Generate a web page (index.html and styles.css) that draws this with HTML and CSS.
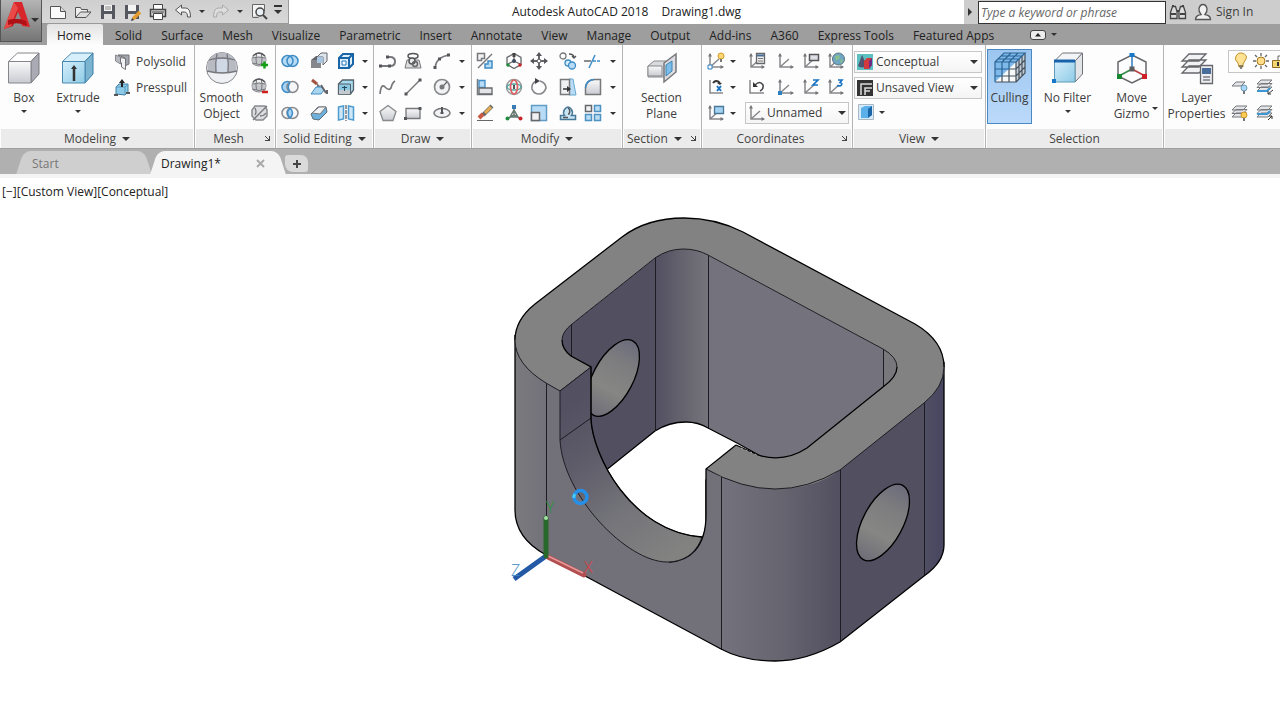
FILE: index.html
```html
<!DOCTYPE html>
<html lang="en">
<head>
  <meta charset="UTF-8">
  <meta name="viewport" content="width=device-width, initial-scale=1.0">
  <title>Autodesk AutoCAD 2018 - Drawing1.dwg</title>
  <link rel="stylesheet" href="styles.css">
</head>
<body>
  <!-- Shared icon parts -->
  <svg class="defs" aria-hidden="true">
    <defs>
      <linearGradient id="steel" x1="0" y1="0" x2="0" y2="1">
        <stop offset="0" stop-color="#fafafa"/><stop offset="1" stop-color="#c9cbd2"/>
      </linearGradient>
      <linearGradient id="sky" x1="0" y1="0" x2="1" y2="1">
        <stop offset="0" stop-color="#d4eefb"/><stop offset="1" stop-color="#8ecbe6"/>
      </linearGradient>
      <symbol id="ucs" viewBox="0 0 18 18">
        <path d="M3 2v13h13M3 15l9-8" fill="none" stroke="#88888c" stroke-width="1.500"/>
        <path d="M1 4.500L3 1l2 3.500zM13.500 13l3.500 2-3.500 2z" fill="#77777b"/>
      </symbol>
      <symbol id="ball" viewBox="0 0 18 18">
        <path d="M1 8q0-6 7-7 7 1 7 7l-1 4q-6 4-12 0z" fill="url(#steel)" stroke="#88898d"/>
        <path d="M1.500 6q6.500-2 13 0v5q-6.500 3-13 0z" fill="#c4c6cc"/>
        <path d="M1.500 6q6.500-2 13 0M1.500 11q6.500 3 13 0M5.500 2q-1 5 0 10M10.500 2q1 5 0 10" fill="none" stroke="#77787c"/>
        <path d="M2 4Q8-2 14 4" fill="none" stroke="#55565a" stroke-width="1.500"/>
      </symbol>
      <symbol id="layers" viewBox="0 0 18 18">
        <path d="M5 9h11l-4 4H1zM5 5.500h11l-4 4H1zM5 2h11l-4 4H1z" fill="#e4e5e8" stroke="#77787c"/>
      </symbol>
    </defs>
  </svg>

  <header class="header">
    <button class="app-button" aria-label="Application menu">
      <svg width="28" height="32" viewBox="0 0 28 32">
        <path d="M11 2h8l-9 24-9 3z" fill="#c4161c"/>
        <path d="M11 2h8l8 25-8-1z" fill="#d8262b"/>
        <path d="M11 2l4 6-7 18-7 3z" fill="#e94a48"/>
        <path d="M5 20q9-3 18 1l1 5q-9-5-19-1z" fill="#b01117"/>
        <path d="M15 12l3 7h-6z" fill="#8b8b8b"/>
      </svg>
      <span class="caret wide"></span>
    </button>
    <div class="header-rows">
      <div class="title-row">
        <div class="quick-access">
          <button aria-label="New"><svg width="18" height="18"><path d="M1.500 3.500h10l5 5v7h-15z" fill="#fafafa" stroke="#555"/><path d="M11.500 3.500v5h5" fill="#ddd" stroke="#555"/></svg></button>
          <button aria-label="Open"><svg width="18" height="18"><path d="M1.500 14.500v-10h5l1 2h6v3" fill="#eee" stroke="#555"/><path d="M1.500 14.500l5-5.500h10.500l-5 5.500z" fill="#ddd" stroke="#555"/></svg></button>
          <button aria-label="Save"><svg width="18" height="18"><path d="M2 2h14v14H2z" fill="#55585e"/><path d="M5 2h8v6H5z" fill="#f4f4f4"/><path d="M5 11h8v5H5z" fill="#ddd"/><path d="M6 4h6M6 6h6" stroke="#888"/></svg></button>
          <button aria-label="Save as"><svg width="18" height="18"><path d="M1 2h14v14H1z" fill="#55585e"/><path d="M4 2h8v6H4z" fill="#f4f4f4"/><path d="M4 11h8v5H4z" fill="#ddd"/><path d="M9 16l7-7" stroke="#e59a2c" stroke-width="3.500"/><path d="M7 18l1-3 2 2z" fill="#333"/></svg></button>
          <button aria-label="Plot"><svg width="18" height="18"><path d="M4.500 1.500h9v5h-9z" fill="#fff" stroke="#444"/><path d="M1.500 6.500h15v7h-15z" fill="#d4d4d4" stroke="#444" stroke-width="1.500"/><path d="M4.500 10.500h9v6h-9z" fill="#fff" stroke="#444"/><path d="M3 9h12" stroke="#444"/></svg></button>
          <button aria-label="Undo"><svg width="18" height="18"><path d="M1.500 7l6-5v3h4q5 0 5 9h-3q0-5-3-5h-3v3z" fill="#f2f2f2" stroke="#555"/></svg></button>
          <button class="caret" aria-label="Undo list"></button>
          <button aria-label="Redo"><svg width="18" height="18"><path d="M16.500 7l-6-5v3h-4q-5 0-5 9h3q0-5 3-5h3v3z" fill="#ddd" stroke="#aaa"/></svg></button>
          <button class="caret" aria-label="Redo list"></button>
          <button aria-label="Preview"><svg width="18" height="18"><path d="M2.500 14V1.500h12V8M2.500 14.500h6" fill="#f4f4f4" stroke="#666"/><circle cx="10" cy="9" r="4" fill="#eaf1f5" stroke="#444" stroke-width="1.500"/><path d="M13 12l4 4" stroke="#444" stroke-width="2"/></svg></button>
          <button class="caret caret-bar" aria-label="Customize toolbar"></button>
        </div>
        <div class="window-title"><span>Autodesk AutoCAD 2018</span><span>Drawing1.dwg</span></div>
        <div class="info-center">
          <button class="expand" aria-label="Collapse search"></button>
          <input class="search" type="text" placeholder="Type a keyword or phrase" aria-label="Search">
          <button aria-label="Find"><svg width="18" height="18"><path d="M3.500 3.500h3l1.500 5v7H1.500v-6zM11.500 3.500h3l2 6v6H10v-7z" fill="#ddd" stroke="#444" stroke-width="1.300"/><path d="M8 8h2M2 11h5M11 11h5M4 2v2M14 2v2" stroke="#444" stroke-width="2"/></svg></button>
          <button class="sign-in"><svg width="18" height="18"><path d="M1.500 16.500q0-4 5.500-5-2.500-3-2-6 1-4 4-4t4 4q.5 3-2 6 5.500 1 5.500 5z" fill="#f1f1f1" stroke="#555" stroke-width="1.300"/></svg>Sign In</button>
        </div>
      </div>
      <nav class="ribbon-tabs">
        <a class="active" href="#">Home</a>
        <a href="#">Solid</a>
        <a href="#">Surface</a>
        <a href="#">Mesh</a>
        <a href="#">Visualize</a>
        <a href="#">Parametric</a>
        <a href="#">Insert</a>
        <a href="#">Annotate</a>
        <a href="#">View</a>
        <a href="#">Manage</a>
        <a href="#">Output</a>
        <a href="#">Add-ins</a>
        <a href="#">A360</a>
        <a href="#">Express Tools</a>
        <a href="#">Featured Apps</a>
        <button class="minimize" aria-label="Minimize ribbon"><svg width="16" height="10"><rect x=".5" y=".5" width="15" height="9" rx="2.500" fill="#eee" stroke="#444"/><path d="M5 6.500L8 3l3 3.500z" fill="#222"/></svg></button>
        <button class="caret" aria-label="Ribbon options"></button>
      </nav>
    </div>
  </header>

  <main class="ribbon">
    <section class="panel modeling">
      <div class="panel-body">
        <button class="big box"><svg width="34" height="34"><path d="M1.500 10.500l9-8.500h21.500l-8 8.500z" fill="#fff" stroke="#85868b"/><path d="M24 10.500L32 2v21l-8 9z" fill="#a9aab3" stroke="#77787e"/><path d="M1.500 10.500H24V32H1.500z" fill="url(#steel)" stroke="#85868b"/></svg>Box<span class="caret"></span></button>
        <button class="big extrude"><svg width="34" height="34"><path d="M1.500 10.500l9-8.500h21.500l-8 8.500z" fill="#d7effb" stroke="#4a8ab0"/><path d="M24 10.500L32 2v21l-8 9z" fill="#7bb4d1" stroke="#3b7ca3"/><path d="M1.500 10.500H24V32H1.500z" fill="url(#sky)" stroke="#4a8ab0"/><path d="M13 30V16" stroke="#333" stroke-width="2.500"/><path d="M10 18l3-4 3 4z" fill="#333"/></svg>Extrude<span class="caret"></span></button>
        <div class="text-tools">
          <button><svg width="18" height="18"><path d="M1.500 2l5 2v7l-5-3z" fill="#b9bac0" stroke="#88898e"/><path d="M4 2h11v9l-4 2V5z" fill="#a3a5ac" stroke="#717278"/><path d="M6.500 4.500l5 1v11l-4-2.500V10l-1-1z" fill="#f2f2f4" stroke="#717278"/></svg>Polysolid</button>
          <button><svg width="18" height="18"><path d="M2 15V8l3-3h9v8l-3 3z" fill="#8dcbe8" stroke="#3b7ca3"/><path d="M2 8h9v7M11 8l3-3" fill="none" stroke="#5a9abb"/><path d="M8 8V3" stroke="#222" stroke-width="2"/><path d="M5 4l3-4 3 4z" fill="#222"/><path d="M0 16h4M12 14h4" stroke="#555" stroke-width="2"/></svg>Presspull</button>
        </div>
      </div>
      <h2>Modeling <span class="caret wide"></span></h2>
    </section>

    <section class="panel mesh">
      <div class="panel-body">
        <button class="big smooth"><svg width="34" height="34"><circle cx="17" cy="17" r="15.500" fill="#eff0f3" stroke="#88898e"/><path d="M2 13q4-11 15-11.500Q28 2 32 13l-1 7q-14 4-28 0z" fill="#b9bbc3"/><path d="M11 8h12v13H11z" fill="#d0d8e6"/><path d="M2 20q15 4 30 0M4 9q13-4 26 0M12 3q-2 9-1 18M22 3q2 9 1 18" fill="none" stroke="#77787e" stroke-width="1.300"/></svg>Smooth<br>Object</button>
        <div class="tools">
          <button aria-label="Smooth more"><svg width="18" height="18"><use href="#ball"/><path d="M10 13h7M13.500 9.500v7" stroke="#13a016" stroke-width="2.500"/></svg></button>
          <button aria-label="Smooth less"><svg width="18" height="18"><use href="#ball"/><path d="M11 14h6" stroke="#d21d1d" stroke-width="2.500"/></svg></button>
          <button aria-label="Refine mesh"><svg width="18" height="18"><path d="M4 2h10l2 4v6l-4 4H5l-4-4V6z" fill="#dcdde1" stroke="#88898d" stroke-width="1.500"/><path d="M2 16L16 2M4 4q2 4 0 7M9 12q4 0 6-3" stroke="#77787c" stroke-width="1.300" fill="none"/></svg></button>
        </div>
      </div>
      <h2>Mesh <span class="launcher"></span></h2>
    </section>

    <section class="panel solid">
      <div class="panel-body tools">
        <button aria-label="Union"><svg width="18" height="18"><circle cx="6.500" cy="9" r="5.500" fill="#b8dcf5"/><circle cx="11.500" cy="9" r="5.500" fill="#b8dcf5"/><circle cx="6.500" cy="9" r="5.500" fill="none" stroke="#3e8cc6" stroke-width="1.500"/><circle cx="11.500" cy="9" r="5.500" fill="none" stroke="#3e8cc6" stroke-width="1.500"/></svg></button>
        <button aria-label="Extract edges"><svg width="18" height="18"><path d="M1 8l5-4h4v9l-3 3H1z" fill="#62656b"/><path d="M1 8h10v8H1z" fill="#85878c"/><path d="M7 5l4-4h6v8l-4 4V5z" fill="#dfe5ec" stroke="#66676c"/><path d="M7 5h6v6H7z" fill="#a8c6e2"/></svg></button>
        <button aria-label="Shell"><svg width="18" height="18"><path d="M2 6l4-4h10v10l-4 4H2z" fill="#dff0fb" stroke="#1a64a8" stroke-width="2"/><path d="M2 6h10v10M12 6l4-4" fill="none" stroke="#1a64a8" stroke-width="2"/><path d="M5 9h4v4H5z" fill="#fff" stroke="#2678bb"/></svg></button>
        <button class="caret" aria-label="More solid tools"></button>

        <button aria-label="Subtract"><svg width="18" height="18"><circle cx="6.500" cy="9" r="5.500" fill="#a8d3f2" stroke="#3e8cc6" stroke-width="1.500"/><circle cx="11.500" cy="9" r="5.500" fill="#f6f6f8" stroke="#88898d" stroke-width="1.500"/><path d="M9 4.500q-3.500 4.500 0 9" fill="none" stroke="#3e8cc6" stroke-width="1.500"/></svg></button>
        <button aria-label="Imprint"><svg width="18" height="18"><path d="M2 2l5 4" stroke="#a45643" stroke-width="3"/><path d="M7 5l4 4-4 1z" fill="#777"/><path d="M6 9h5l3 3-3 4H1z" fill="#a9d5ef" stroke="#3e8cc6"/><path d="M11 7l5 8M17 16v-4" stroke="#66676b" stroke-width="2"/></svg></button>
        <button aria-label="Offset face"><svg width="18" height="18"><path d="M1.500 6l4-4h11v10l-3 4h-12z" fill="#a5daf0" stroke="#56616a" stroke-width="1.300"/><path d="M1.500 6h12v10h-12z" fill="#8cc7e2" stroke="#56616a"/><path d="M2 12h11v4H2z" fill="#c3cbd0"/><path d="M7.500 13V8M5 9.500h5" stroke="#24495e"/></svg></button>
        <button class="caret" aria-label="More face tools"></button>

        <button aria-label="Intersect"><svg width="18" height="18"><circle cx="6.500" cy="9" r="5.500" fill="#f6f6f8" stroke="#88898d" stroke-width="1.500"/><circle cx="11.500" cy="9" r="5.500" fill="#f6f6f8" stroke="#88898d" stroke-width="1.500"/><path d="M9 4q5 5 0 10-5-5 0-10z" fill="#a8d3f2" stroke="#3e8cc6" stroke-width="1.500"/></svg></button>
        <button aria-label="Fillet edge"><svg width="18" height="18"><path d="M1 10l7-7h8l1 5-8 8-6-1z" fill="#6db0db" stroke="#5c6a75"/><path d="M2 9l7-6h7l-6 7z" fill="#f1f3f5" stroke="#77787c"/></svg></button>
        <button aria-label="Separate"><svg width="18" height="18"><path d="M1.500 3l5-1v13l-5 1zM16.500 3l-5-1v13l5 1z" fill="#cde7f7" stroke="#4e9bcf" stroke-width="1.500"/><path d="M9 1v16" stroke="#77787c" stroke-width="1.500" stroke-dasharray="4 1"/></svg></button>
        <button class="caret" aria-label="More body tools"></button>
      </div>
      <h2>Solid Editing <span class="caret wide"></span></h2>
    </section>

    <section class="panel draw">
      <div class="panel-body tools">
        <button aria-label="Polyline"><svg width="18" height="18"><path d="M2 14h9q5 0 5-4.500T11 5H8" fill="none" stroke="#77787c" stroke-width="2"/><path d="M0 12.500h3v3H0zM7 3.500h3v3H7zM9 12.500h3v3H9z" fill="#55565a"/></svg></button>
        <button aria-label="Helix"><svg width="18" height="18"><path d="M3 8h12l2 8H1z" fill="#ddd" stroke="#77787c"/><ellipse cx="9" cy="4" rx="5" ry="2.500" fill="none" stroke="#55565a" stroke-width="1.500"/><ellipse cx="8" cy="9" rx="3" ry="3" fill="#eee" stroke="#55565a" stroke-width="1.500"/><circle cx="11" cy="12" r="2.500" fill="none" stroke="#66676b" stroke-width="1.500"/></svg></button>
        <button aria-label="Arc"><svg width="18" height="18"><path d="M2 16Q3 5 16 3" fill="none" stroke="#77787c" stroke-width="1.500"/><path d="M.5 14h3v3h-3zM5 5.500h3v3H5zM14 1.500h3v3h-3z" fill="#55565a"/></svg></button>
        <button class="caret" aria-label="Arc options"></button>

        <button aria-label="Spline"><svg width="18" height="18"><path d="M1 16Q2 5 6 9t6 1q1-5 4-7" fill="none" stroke="#77787c" stroke-width="1.700"/></svg></button>
        <button aria-label="Line"><svg width="18" height="18"><path d="M2 16L16 2" stroke="#77787c" stroke-width="1.500"/><path d="M.5 14.500h3v3h-3zM14.500.5h3v3h-3z" fill="#55565a"/></svg></button>
        <button aria-label="Circle"><svg width="18" height="18"><circle cx="9" cy="9" r="7.500" fill="#f1f2f4" stroke="#88898d" stroke-width="1.700"/><path d="M9 9l5-5" stroke="#66676b" stroke-width="1.300"/><circle cx="9" cy="9" r="2.500" fill="#77787c"/></svg></button>
        <button class="caret" aria-label="Circle options"></button>

        <button aria-label="Polygon"><svg width="18" height="18"><path d="M9 1.500l8 6-3 9H4L1 7.500z" fill="url(#steel)" stroke="#88898d" stroke-width="1.300"/></svg></button>
        <button aria-label="Rectangle"><svg width="18" height="18"><path d="M2 4.500h14v10H2z" fill="url(#steel)" stroke="#77787c" stroke-width="1.300"/><path d="M0 13h3v3H0zM14.500 3h3v3h-3z" fill="#55565a"/></svg></button>
        <button aria-label="Ellipse"><svg width="18" height="18"><ellipse cx="9" cy="9" rx="8" ry="4.500" fill="#f1f2f4" stroke="#77787c" stroke-width="1.500"/><path d="M9 3v7M7.500 9h3" stroke="#55565a" stroke-width="2"/></svg></button>
        <button class="caret" aria-label="Ellipse options"></button>
      </div>
      <h2>Draw <span class="caret wide"></span></h2>
    </section>

    <section class="panel modify">
      <div class="panel-body tools">
        <button aria-label="3D mirror"><svg width="18" height="18"><path d="M1.500 1.500h7v5h-3v2h-4z" fill="#f2f2f4" stroke="#77787c" stroke-width="1.500"/><path d="M2 16L16 2" stroke="#77787c" stroke-width="1.500"/><path d="M12 9h4v7H9v-4h3z" fill="#b8dcf5" stroke="#3e8cc6" stroke-width="1.500"/></svg></button>
        <button aria-label="3D move"><svg width="18" height="18"><path d="M9 1.500l7 4v7l-7 4-7-4v-7zM9 9V3M9 9l6 3M9 9l-6 3" fill="none" stroke="#66676b" stroke-width="1.300"/><path d="M7.500 1h3v4h-3z" fill="#444"/><circle cx="3" cy="13" r="1.700" fill="#238b3d"/><circle cx="15" cy="13" r="1.700" fill="#c9252b"/><circle cx="9" cy="9" r="2" fill="#3c4a5c"/></svg></button>
        <button aria-label="Move"><svg width="18" height="18"><path d="M9 2v14M2 9h14" stroke="#66676b" stroke-width="2"/><path d="M6 4l3-4 3 4zM6 14l3 4 3-4zM4 6L0 9l4 3zM14 6l4 3-4 3z" fill="#55565a"/><path d="M7.500 7.500h3v3h-3z" fill="#fff" stroke="#777"/></svg></button>
        <button aria-label="Copy"><svg width="18" height="18"><circle cx="4" cy="4" r="3" fill="#fff" stroke="#77787c" stroke-width="1.300"/><path d="M10 2q5 0 5 4M13 4l2 2 2-2" fill="none" stroke="#55565a" stroke-width="1.300"/><circle cx="9" cy="11" r="3" fill="#d9eefb" stroke="#3e8cc6" stroke-width="1.300"/><circle cx="13" cy="13.500" r="3.500" fill="#b8dcf5" stroke="#3e8cc6" stroke-width="1.300"/></svg></button>
        <button aria-label="Trim"><svg width="18" height="18"><path d="M0 9h7" stroke="#66676b" stroke-width="1.500"/><path d="M5 16l6-13" stroke="#3e8cc6" stroke-width="1.500"/><path d="M9 9h8" stroke="#3e8cc6" stroke-width="1.500" stroke-dasharray="3 1"/></svg></button>
        <button class="caret" aria-label="Trim options"></button>

        <button aria-label="3D align"><svg width="18" height="18"><path d="M1.500 1v15.500h15" fill="none" stroke="#77787c" stroke-width="1.500"/><path d="M3 2.500h6v7H3z" fill="#b8dcf5" stroke="#3e8cc6" stroke-width="1.300"/><path d="M3 10h13v6H3z" fill="#e3e4e8" stroke="#66676b" stroke-width="1.300"/></svg></button>
        <button aria-label="3D rotate"><svg width="18" height="18"><circle cx="9" cy="9" r="7.500" fill="#f4f6f8" stroke="#999" stroke-width="1.500"/><ellipse cx="9" cy="9" rx="7" ry="3" fill="none" stroke="#4ba6a0" stroke-width="1.300"/><ellipse cx="9" cy="9" rx="3.500" ry="7" fill="none" stroke="#dd6064" stroke-width="1.700"/><path d="M9 7v4" stroke="#555" stroke-width="2"/></svg></button>
        <button aria-label="Rotate"><svg width="18" height="18"><path d="M6 3q-5 3-4 8 2 5 7 5t7-6q0-5-6-7" fill="none" stroke="#88898d" stroke-width="1.700"/><path d="M5 0l5 3-5 3z" fill="#44454a"/></svg></button>
        <button aria-label="Stretch"><svg width="18" height="18"><path d="M10 1h4l3 16h-7z" fill="#b8dcf5" stroke="#68a9d2"/><path d="M1.500 1.500h9v15h-9z" fill="#f0f1f3" stroke="#77787c" stroke-width="1.500"/><path d="M4 11h6" stroke="#333" stroke-width="1.500"/><path d="M8 8l4 3-4 3z" fill="#333"/></svg></button>
        <button aria-label="Fillet"><svg width="18" height="18"><path d="M1.500 16.500V9Q3 2 10 1.500h6.500v15z" fill="url(#steel)" stroke="#77787c" stroke-width="1.500"/><path d="M1.500 10Q2 2 10 1.500" fill="none" stroke="#3e8cc6" stroke-width="1.500"/></svg></button>
        <button class="caret" aria-label="Fillet options"></button>

        <button aria-label="Erase"><svg width="18" height="18"><path d="M1 16.500h16" stroke="#66676b"/><path d="M7 11l9-9" stroke="#67686c" stroke-width="4"/><path d="M9 9l6-6" stroke="#e6ad51" stroke-width="3"/><path d="M3 14l4-4" stroke="#c95b45" stroke-width="4"/></svg></button>
        <button aria-label="3D scale"><svg width="18" height="18"><path d="M9 3v8M9 11l7 4M9 11l-7 4M5 13l4-7 4 7z" fill="none" stroke="#66786f" stroke-width="1.500"/><path d="M7 1h4v4H7z" fill="#367db8"/><circle cx="2.500" cy="14.500" r="2" fill="#238b3d"/><circle cx="15.500" cy="14.500" r="2" fill="#c9252b"/></svg></button>
        <button aria-label="Scale"><svg width="18" height="18"><path d="M1.500 1.500h15v15h-15z" fill="#b8dcf5" stroke="#5f9cc6" stroke-width="1.500"/><path d="M1.500 8.500h8v8h-8z" fill="#f0f1f3" stroke="#66676b" stroke-width="1.500"/></svg></button>
        <button aria-label="Offset"><svg width="18" height="18"><path d="M1.500 15.500v-4h4q-2-3 0-6 3.500-5 7 0 2 3 0 6h4v4z" fill="#c9e4f5" stroke="#477997" stroke-width="1.500"/><path d="M4 13.500h5M9 4q3 2 1 6h-1" fill="none" stroke="#55565a" stroke-width="1.500"/></svg></button>
        <button aria-label="Array"><svg width="18" height="18"><path d="M1.500 1.500h6v6h-6z" fill="#f2f2f4" stroke="#66676b" stroke-width="1.500"/><path d="M10.500 1.500h6v6h-6zM1.500 10.500h6v6h-6zM10.500 10.500h6v6h-6z" fill="#b8dcf5" stroke="#4c91c0" stroke-width="1.500"/></svg></button>
        <button class="caret" aria-label="Array options"></button>
      </div>
      <h2>Modify <span class="caret wide"></span></h2>
    </section>

    <section class="panel section-plane">
      <div class="panel-body">
        <button class="big"><svg width="34" height="34"><path d="M3 15l6-5h15v12l-6 4H3z" fill="#d9dadd" stroke="#88898d"/><path d="M3 15h14v10H3z" fill="url(#steel)" stroke="#88898d"/><path d="M19 12L31 3v18L19 31z" fill="#dcdde0" stroke="#77787c" stroke-width="1.500"/><path d="M21 14l6-4v10l-6 5z" fill="#7dbdea" stroke="#3c83b4"/></svg>Section<br>Plane</button>
      </div>
      <h2>Section <span class="caret wide"></span> <span class="launcher"></span></h2>
    </section>

    <section class="panel coordinates">
      <div class="panel-body tools">
        <button aria-label="UCS icon"><svg width="18" height="18"><use href="#ucs"/><path d="M1 13h4v4H1z" fill="#fff" stroke="#2c7fc0"/><circle cx="14" cy="4" r="3" fill="#ffd877" stroke="#d29a20"/><path d="M14 7v3" stroke="#777" stroke-width="2"/></svg></button>
        <button class="caret" aria-label="UCS icon options"></button>
        <button aria-label="UCS named"><svg width="18" height="18"><use href="#ucs"/><path d="M8.500 1.500h8v10h-8z" fill="#eee" stroke="#66676b" stroke-width="1.300"/><path d="M9 3.500h7" stroke="#496e98" stroke-width="2"/><path d="M10 6.500h5M10 9h5" stroke="#777"/></svg></button>
        <button aria-label="UCS"><svg width="18" height="18"><use href="#ucs"/></svg></button>
        <button aria-label="UCS object"><svg width="18" height="18"><use href="#ucs"/><path d="M7.500 2.500h9v6h-9z" fill="#dedfe5" stroke="#55565a" stroke-width="1.500"/></svg></button>
        <button aria-label="UCS world"><svg width="18" height="18"><use href="#ucs"/><circle cx="11.500" cy="7" r="6" fill="#6ea7c4" stroke="#5f7480"/><path d="M8 4l4-1 1 3-4 3zM13 8l3-1-2 5z" fill="#8bc08a"/></svg></button>

        <button aria-label="UCS rotate X"><svg width="18" height="18"><path d="M3 2v13h13" fill="none" stroke="#88888c" stroke-width="1.500"/><path d="M6 5q3-4 7 0" fill="none" stroke="#333" stroke-width="2"/><path d="M10 5h5l-2 2z" fill="#333"/><path d="M10 8l4 5M14 8l-4 5" stroke="#1973c4" stroke-width="2"/></svg></button>
        <button class="caret" aria-label="Rotate options"></button>
        <button aria-label="UCS previous"><svg width="18" height="18"><path d="M2 2v13h14" fill="none" stroke="#88888c" stroke-width="1.500"/><path d="M7 7q5-5 8 0 1 4-3 6" fill="none" stroke="#44454a" stroke-width="1.500"/><path d="M5 4v5h5z" fill="#333"/></svg></button>
        <button aria-label="UCS origin"><svg width="18" height="18"><use href="#ucs"/><path d="M1 13h4v4H1z" fill="#2c7fc0"/></svg></button>
        <button aria-label="UCS Z axis"><svg width="18" height="18"><use href="#ucs"/><path d="M11 2h5l-5 5h5" fill="none" stroke="#1973c4" stroke-width="1.700"/></svg></button>
        <button aria-label="UCS 3 point"><svg width="18" height="18"><use href="#ucs"/><path d="M11 2h4l-2 2.500q3 1 1 3-2 1-4 0" fill="none" stroke="#1973c4" stroke-width="1.700"/></svg></button>

        <button aria-label="UCS view"><svg width="18" height="18"><use href="#ucs"/><path d="M7.500 2.500h9v7h-9z" fill="#a4d2f2" stroke="#4a7899" stroke-width="1.300"/></svg></button>
        <button class="caret" aria-label="UCS view options"></button>
        <label class="combo ucs-combo"><svg width="18" height="18"><use href="#ucs"/></svg><select aria-label="Named UCS"><option>Unnamed</option></select></label>
      </div>
      <h2>Coordinates <span class="launcher"></span></h2>
    </section>

    <section class="panel view">
      <div class="panel-body view-body">
        <label class="combo"><svg width="16" height="16"><path d="M0 0h16v16H0z" fill="#5cc0c0"/><path d="M5 1l5 11q-5 3-9 0z" fill="#4c5470"/><path d="M7 7l3-3h5v7l-3 4H7z" fill="#d2383c"/><path d="M12 7l3-3v7l-3 4z" fill="#6e2b84"/></svg><select aria-label="Visual style"><option>Conceptual</option></select></label>
        <label class="combo"><svg width="16" height="16"><path d="M0 0h16v16H0z" fill="#333"/><path d="M4 15V4h11M8 15V8h7M8 11h5" fill="none" stroke="#ddd" stroke-width="1.500"/></svg><select aria-label="Saved view"><option>Unsaved View</option></select></label>
        <div class="viewcube"><button aria-label="Viewport"><svg width="18" height="18"><path d="M1.500 1.500h15v15h-15z" fill="#d5eafa" stroke="#aab8c4"/><path d="M4 5l4-2h7v9l-4 3H4z" fill="#5bb0ea"/><path d="M11 6l4-3v9l-4 3z" fill="#1a65a8"/></svg></button><button class="caret" aria-label="Viewport options"></button></div>
      </div>
      <h2>View <span class="caret wide"></span></h2>
    </section>

    <section class="panel selection">
      <div class="panel-body">
        <button class="big culling"><svg width="34" height="34"><path d="M2 11l9-9h21v20l-9 9H2z" fill="#f6f8fa"/><path d="M2 11l9-9h21l-9 9L2 31z" fill="#7fb9ea"/><path d="M23 11l9-9v20l-9 9z" fill="#c4ced8"/><path d="M23 11v20H2M32 2v20l-9 9M26 8v20M29 5v20M16 18v13M9 25v6M9 25h14l9-9M16 18h7l9-9" fill="none" stroke="#44505b" stroke-width="1.200"/><path d="M23 11H2v20M2 11l9-9h21l-9 9M9 11l9-9M16 11l9-9M5 8h21M8 5h21M9 11v14M16 11v7M2 18h14M2 25h7" fill="none" stroke="#2a6596" stroke-width="1.200"/></svg>Culling</button>
        <button class="big no-filter"><svg width="34" height="34"><path d="M3.500 10l8-8h20l-7 8z" fill="#f3f4f6" stroke="#717277"/><path d="M24 10l7.500-8v21L24 31z" fill="#e3e4e8" stroke="#717277"/><path d="M3.500 10H24v21H3.500z" fill="url(#sky)" stroke="#619ab8"/><path d="M3 10h21" stroke="#1763ab" stroke-width="3"/><path d="M1 28h4v4H1z" fill="#1878c8"/></svg>No Filter<span class="caret"></span></button>
        <button class="big gizmo"><svg width="34" height="34"><path d="M17 4l14 7v14l-14 7-14-7V11z" fill="none" stroke="#66676b" stroke-width="1.500"/><path d="M17 18V4" stroke="#2878be" stroke-width="1.500"/><path d="M17 18l13 7" stroke="#b83b3e" stroke-width="1.500"/><path d="M17 18L4 25" stroke="#338a49" stroke-width="1.500"/><path d="M14.500 2h5v4h-5z" fill="#1878c8"/><path d="M2 23h5v5H2z" fill="#16882f"/><path d="M27 23h5v5h-5z" fill="#d02027"/><path d="M14.500 15.500h5v5h-5z" fill="#5c5d61"/></svg><span>Move<br>Gizmo</span><span class="caret"></span></button>
      </div>
      <h2>Selection</h2>
    </section>

    <section class="panel layers">
      <div class="panel-body">
        <button class="big properties"><svg width="34" height="34"><path d="M9 15h17l-7 7H2zM9 9h17l-7 7H2zM9 3h17l-7 7H2z" fill="#f1f2f4" stroke="#66676b" stroke-width="1.300"/><path d="M20.500 14.500h12v18h-12z" fill="#eceef2" stroke="#66676b" stroke-width="1.300"/><path d="M22 17h9v6h-9z" fill="#496d9b"/><path d="M23 26h7M23 29h7" stroke="#44454a"/></svg>Layer<br>Properties</button>
        <div class="layer-tools">
          <div class="layer-state">
            <svg width="18" height="18"><path d="M6 11Q2 8 4 4q2-4 6-3 6 2 4 6l-3 5v3H7z" fill="#ffe394" stroke="#bd912d"/><path d="M7 14h4M8 16h2" stroke="#666" stroke-width="1.500"/></svg>
            <svg width="18" height="18"><circle cx="9" cy="9" r="4" fill="#ffdd8a" stroke="#a3751b"/><path d="M9 1v3M9 14v3M1 9h3M14 9h3M3 3l2 2M13 13l2 2M3 15l2-2M13 5l2-2" stroke="#666" stroke-width="1.300"/></svg>
            <svg width="18" height="18"><path d="M.5 8.500h14v7H.500z" fill="#f5d872" stroke="#8d7122"/><path d="M6 10v4" stroke="#333" stroke-width="2"/><path d="M6 8V4h6" fill="none" stroke="#666"/></svg>
          </div>
          <button aria-label="Layer off"><svg width="18" height="18"><path d="M5 4h9l-4 4H1z" fill="#e4e5e8" stroke="#77787c"/><circle cx="13" cy="10" r="3" fill="#abd7f5" stroke="#689abb"/><path d="M13 13v3" stroke="#777" stroke-width="2"/></svg></button>
          <button aria-label="Layer isolate"><svg width="18" height="18"><use href="#layers"/><path d="M1 13h10l3-3" stroke="#3c97d2" stroke-width="2" fill="none"/><path d="M17 12l-5 4M12 13v3h3" stroke="#333" fill="none"/></svg></button>
          <button aria-label="Layers on"><svg width="18" height="18"><use href="#layers"/><circle cx="13" cy="11" r="3" fill="#ffcc57" stroke="#d19726"/><path d="M13 14v3" stroke="#777" stroke-width="2"/></svg></button>
          <button aria-label="Layer unisolate"><svg width="18" height="18"><use href="#layers"/><path d="M1 10h10l3-3" stroke="#3c97d2" stroke-width="2" fill="none"/><path d="M12 16l4-4M13 12h3v3" stroke="#333" fill="none"/></svg></button>
        </div>
      </div>
      <h2></h2>
    </section>
  </main>

  <nav class="file-tabs">
    <a class="file-tab" href="#">Start</a>
    <div class="file-tab current"><a href="#">Drawing1*</a><button aria-label="Close drawing"><svg width="10" height="10"><path d="M1 1l7 7M8 1L1 8" stroke="#aaa" stroke-width="2"/></svg></button></div>
    <button class="new-tab" aria-label="New drawing"><svg width="10" height="10"><path d="M5 1v8M1 5h8" stroke="#444" stroke-width="2"/></svg></button>
  </nav>

  <div class="viewport">
    <div class="view-label">[−][Custom View][Conceptual]</div>
    <svg class="model" width="460" height="500" viewBox="500 178 460 500">
      <defs>
        <linearGradient id="leftCorner"><stop offset="0" stop-color="#7b7b7e"/><stop offset="1" stop-color="#72717a"/></linearGradient>
        <linearGradient id="frontCorner"><stop offset="0" stop-color="#74737d"/><stop offset=".45" stop-color="#686771"/><stop offset="1" stop-color="#524f60"/></linearGradient>
        <linearGradient id="rightCorner"><stop offset="0" stop-color="#504e63"/><stop offset="1" stop-color="#464560"/></linearGradient>
        <linearGradient id="backCorner"><stop offset="0" stop-color="#524f61"/><stop offset=".55" stop-color="#66656f"/><stop offset="1" stop-color="#76757d"/></linearGradient>
        <linearGradient id="slot" gradientUnits="userSpaceOnUse" x1="575" y1="400" x2="680" y2="550"><stop offset="0" stop-color="#535062"/><stop offset=".3" stop-color="#5e5c69"/><stop offset=".65" stop-color="#74747a"/><stop offset="1" stop-color="#828281"/></linearGradient>
        <linearGradient id="hole" x1=".5" y1="0" x2=".5" y2="1"><stop offset="0" stop-color="#6c6b7b"/><stop offset=".3" stop-color="#7d7d7f"/><stop offset=".65" stop-color="#868684"/><stop offset="1" stop-color="#6e6d77"/></linearGradient>
        <clipPath id="body"><path d="M515 335V510Q515 538 546 555L721 649Q743 661 775 661T840 642L924 576Q944 562 944 545V362L840 470 721 477z"/></clipPath>
        <clipPath id="inside"><path d="M736 445L758 455Q784 463 807 448L883 387Q897 377 897 367T883 349L708 255Q697 249 683 249 668 249 655 258L572 324Q562 332 562 340 562 349 571 356L591 367V418C592 455 631 532 702 537Q706 528 706 515V469z"/></clipPath>
      </defs>

      <!-- Outer walls -->
      <g clip-path="url(#body)">
        <path d="M514 330h33v260h-33z" fill="url(#leftCorner)"/>
        <path d="M546 370h176v300H546z" fill="#72717a"/>
        <path d="M721 440h120v230H721z" fill="url(#frontCorner)"/>
        <path d="M840 380h85v280h-85z" fill="#524f60"/>
        <path d="M924 350h22v240h-22z" fill="url(#rightCorner)"/>
        <path d="M546.500 383v172M721.500 477v172M840.500 470v172M924.500 403v173" class="edge"/>
      </g>
      <path d="M515 335V510Q515 538 546 555L721 649Q743 661 775 661T840 642L924 576Q944 562 944 545V362" class="outline"/>

      <!-- Top face -->
      <path d="M515 340Q515 320 535 304L622 237Q647 218 684 218 715 218 743 232L915 324Q944 341 944 367 944 387 924 403L840 470Q815 489 775 489 742 489 707 469L736 445 883 349 708 255 655 258 572 324 591 367 560 391 546 383Q515 364 515 340z" fill="#828283"/>
      <path d="M515 340Q515 364 546 383L560 391 591 367M706 469Q742 489 775 489T840 470L924 403Q944 387 944 367" class="edge"/>
      <path d="M515 340Q515 320 535 304L622 237Q647 218 684 218 715 218 743 232L915 324Q944 341 944 367" class="outline"/>

      <!-- Inner walls and opening -->
      <g clip-path="url(#inside)">
        <path d="M560 240h96v240h-96z" fill="#524f61"/>
        <path d="M655 240h54v240h-54z" fill="url(#backCorner)"/>
        <path d="M708 240h176v240H708z" fill="#74737d"/>
        <path d="M883 340h20v60h-20z" fill="#77777c"/>
        <ellipse cx="613" cy="378" rx="20" ry="42" transform="rotate(28 613 378)" fill="url(#hole)" class="outline"/>
        <path d="M580 491L655 431Q669 422 686 422 698 422 708 428L737 443 764 458 706 480V550H600z" fill="#fff" class="outline"/>
        <path d="M571.500 320v40M655.500 258v173M708.500 255v173M883.500 345v50" class="edge"/>
      </g>
      <path d="M736 445L706 469V515C706 548 689 561 669 562" class="outline"/>
      <path d="M560 391L591 367V418C592 455 631 532 702 537 696 554 683 562 667 562 627 562 563 496 560 440z" fill="url(#slot)" class="edge"/>
      <path d="M560 440L591 418" class="edge"/>
      <path d="M736 445L758 455Q784 463 807 448L883 387Q897 377 897 367M562 340Q562 349 571 356L591 367V418C592 455 631 532 702 537" class="outline"/>
      <path d="M897 367Q897 357 883 349L708 255Q697 249 683 249 668 249 655 258L572 324Q562 332 562 340" class="edge"/>
      <path d="M741 448l16 7" stroke="#aaa" stroke-dasharray="2 3"/>

      <!-- Side hole -->
      <ellipse cx="883" cy="522.500" rx="20" ry="42" transform="rotate(28 883 522.500)" fill="url(#hole)" class="outline"/>

      <!-- UCS icon -->
      <path d="M546 556L514 579" stroke="#2459a6" stroke-width="5"/>
      <path d="M548 557L584 575" stroke="#b34e50" stroke-width="5" stroke-linecap="round"/>
      <path d="M548 556L583 573" stroke="#e59a9a" stroke-width="1.500"/>
      <path d="M546 556V518" stroke="#28682b" stroke-width="5" stroke-linecap="round"/>
      <circle cx="546" cy="518" r="2" fill="#a6dfa5"/>
      <text x="546" y="513" fill="#1f9a30">Y</text>
      <text x="584" y="573" fill="#e03a3a">X</text>
      <text x="511" y="576" fill="#3c8bc7">Z</text>

      <!-- Busy cursor -->
      <circle cx="580.500" cy="497" r="6.500" fill="none" stroke="#2590ea" stroke-width="3.500"/>
      <path d="M574 498q-.5-2 1-4" fill="none" stroke="#44c8f5" stroke-width="3"/>
    </svg>
  </div>
</body>
</html>
```
FILE: styles.css
```css
* {
  box-sizing: border-box;
}

body {
  margin: 0;
  min-height: 100vh;
  display: flex;
  flex-direction: column;
  overflow: hidden;
  font-family: "Open Sans", "Noto Sans", sans-serif;
  font-size: 12px;
  line-height: 16px;
  color: #3c3c3c;
  background: #fff;
}

button, select, input {
  font: inherit;
  color: inherit;
  border: 0;
  padding: 0;
  margin: 0;
  background: none;
}

button {
  cursor: pointer;
}

a {
  color: inherit;
  text-decoration: none;
}

svg {
  display: block;
  flex: none;
}

.defs {
  position: absolute;
  width: 0;
  height: 0;
}

/* Small triangles */
.caret {
  display: inline-flex;
  align-items: center;
  justify-content: center;
  width: 8px;
}

.caret::after, .combo::after {
  content: "";
  border: 3px solid transparent;
  border-top-color: #333;
  border-bottom: 0;
}

.wide::after {
  border-width: 4px;
  border-bottom: 0;
}

.caret-bar::after {
  border-width: 4px;
  border-bottom: 0;
  box-shadow: 0 -3px #d2d2d2, 0 -5px #333;
}

/* Header */
.header {
  display: flex;
  align-items: flex-start;
  background: #9e9e9e;
}

.app-button {
  width: 42px;
  height: 42px;
  flex: none;
  display: flex;
  align-items: flex-start;
  padding-left: 2px;
  border: 1px solid #555;
  border-top: 0;
  background: linear-gradient(#b4b4b4, #757575);
}

.app-button .caret {
  margin-top: 18px;
}

.header-rows {
  flex: 1;
  min-width: 0;
}

.title-row {
  display: flex;
  height: 24px;
  background: #fff;
}

.quick-access {
  display: flex;
  align-items: center;
  gap: 7px;
  width: 247px;
  padding-left: 7px;
  background: linear-gradient(#cfcfcf, #d8d8d8);
  border: 1px solid #999;
  border-left: 0;
  border-top: 0;
}

.quick-access .caret {
  margin: 0 -1px;
}

.window-title {
  flex: 1;
  display: flex;
  align-items: center;
  justify-content: center;
  gap: 13px;
  color: #222;
}

.info-center {
  display: flex;
  align-items: center;
  gap: 7px;
  width: 316px;
  background: #cdcdcd;
}

.expand {
  width: 7px;
  padding-left: 4px;
}

.expand::after {
  content: "";
  display: block;
  width: 0;
  border: 4px solid transparent;
  border-left-color: #333;
  border-right: 0;
}

.search {
  width: 188px;
  height: 23px;
  padding: 0 2px;
  border: 1px solid #333;
  background: #fff;
}

.search + button {
  margin-left: -4px;
}

.search::placeholder {
  color: #666;
  font-style: italic;
  opacity: 1;
}

.sign-in {
  display: flex;
  align-items: center;
  gap: 4px;
}

.ribbon-tabs {
  display: flex;
  align-items: center;
  height: 21px;
  padding-left: 5px;
  color: #222;
}

.ribbon-tabs a {
  padding: 2px 9px 0 10px;
  line-height: 19px;
  white-space: nowrap;
}

.ribbon-tabs .active {
  margin-right: 2px;
  padding: 2px 12px 0 10px;
  border-radius: 2px 2px 0 0;
  background: linear-gradient(#e2e2e2, #fdfdfd);
}

.minimize {
  margin: 0 4px 0 27px;
}

/* Ribbon */
.ribbon {
  display: flex;
  height: 103px;
  overflow: hidden;
  background: #fdfdfd;
}

.panel {
  flex: none;
  display: flex;
  flex-direction: column;
  border-right: 1px solid #b4b4b4;
}

.modeling { width: 195px; }
.mesh { width: 81px; }
.solid, .draw { width: 98px; }
.modify, .coordinates { width: 151px; }
.section-plane { width: 79px; }
.view { width: 133px; }
.selection { width: 178px; }

.layers {
  flex: 1 0 116px;
  border-right: 0;
}

.panel-body {
  display: flex;
  height: 84px;
}

.panel h2 {
  display: flex;
  align-items: center;
  justify-content: center;
  gap: 6px;
  height: 19px;
  margin: 0 1px;
  font-size: 12px;
  font-weight: 400;
  color: #444;
  background: #ebebeb;
  white-space: nowrap;
  position: relative;
}

.mesh h2, .coordinates h2 {
  padding-right: 13px;
}

.section-plane h2 {
  justify-content: flex-start;
  padding-left: 3px;
}

.launcher {
  position: absolute;
  right: 4px;
  width: 5px;
  height: 5px;
  border: 1px solid #444;
  border-width: 0 1px 1px 0;
  background: linear-gradient(to top right, transparent 40%, #444 40%, #444 60%, transparent 60%);
}

.big {
  display: flex;
  flex-direction: column;
  align-items: center;
  padding: 6px 0 0;
  white-space: nowrap;
}

.big svg {
  margin-bottom: 5px;
}

.big .caret {
  height: 10px;
}

.box { width: 48px; }
.extrude { width: 60px; }
.smooth { width: 53px; }
.section-plane .big { width: 77px; }
.properties { width: 65px; }
.no-filter { width: 71px; }

.text-tools {
  display: flex;
  flex-direction: column;
  padding: 4px 0 0 6px;
}

.text-tools button {
  display: flex;
  align-items: center;
  gap: 4px;
  height: 26px;
}

.tools {
  display: grid;
  grid-auto-rows: 26px;
  align-items: center;
  align-content: start;
  justify-content: start;
  padding-top: 3px;
}

.mesh .tools {
  padding-left: 3px;
}

.solid .tools {
  grid-template-columns: 29px 27px 24px 8px;
  padding-left: 5px;
}

.draw .tools {
  grid-template-columns: 25px 29px 25px 8px;
  padding-left: 5px;
}

.modify .tools {
  grid-template-columns: 29px 25px 29px 25px 25px 8px;
  padding-left: 4px;
}

.coordinates .tools {
  grid-template-columns: 22px 19px 29px 25px 25px 18px;
  padding-left: 5px;
}

.combo {
  display: flex;
  align-items: center;
  gap: 3px;
  height: 22px;
  padding: 0 3px 0 2px;
  border: 1px solid #c6c6c6;
  background: linear-gradient(#fff, #f4f4f4);
}

.combo::after {
  border-width: 4px;
  border-bottom: 0;
}

.combo select {
  flex: 1;
  min-width: 0;
  appearance: none;
}

.ucs-combo {
  grid-column: span 4;
  width: 104px;
  margin-left: -3px;
  padding-right: 2px;
  gap: 1px;
}

.view-body {
  flex-direction: column;
  gap: 4px;
  padding: 6px 3px 0 1px;
}

.viewcube {
  display: flex;
  align-items: center;
  gap: 3px;
  padding-left: 3px;
}

.culling {
  width: 45px;
  height: 75px;
  margin: 4px 0 0 1px;
  padding-top: 1px;
  border: 1px solid #4a88c4;
  background: linear-gradient(#9cc6ef, #bcdafa);
}

.gizmo {
  width: 57px;
  position: relative;
}

.gizmo .caret {
  position: absolute;
  right: 1px;
  bottom: 16px;
}

.layer-tools {
  display: grid;
  grid-template-columns: 25px 25px;
  grid-auto-rows: 26px;
  align-items: center;
  padding: 3px 0 0 2px;
}

.layer-state {
  grid-column: span 2;
  display: flex;
  align-items: center;
  gap: 2px;
  width: 80px;
  height: 23px;
  margin-left: -3px;
  padding-left: 3px;
  border: 1px solid #c6c6c6;
}

/* Drawing tabs */
.file-tabs {
  display: flex;
  align-items: flex-end;
  height: 30px;
  padding: 0 0 0 17px;
  background: #b0b0b0;
  border-top: 1px solid #a0a0a0;
  border-bottom: 4px solid #f4f4f4;
}

.file-tab {
  position: relative;
  z-index: 0;
  width: 134px;
  height: 23px;
  padding: 5px 15px 0;
  color: #777;
}

.file-tab::before, .file-tab::after {
  content: "";
  position: absolute;
  z-index: -1;
  inset: 0 20px 0 3px;
  background: #cfcfcf;
  border-radius: 7px 0 0 0;
  transform: skewX(-18deg);
}

.file-tab::after {
  inset: 0 3px 0 20px;
  border-radius: 0 7px 0 0;
  transform: skewX(18deg);
}

.current {
  display: flex;
  justify-content: space-between;
  align-items: flex-start;
  padding: 5px 19px 0 10px;
  z-index: 1;
  color: #222;
}

.current button {
  margin-top: 3px;
}

.current::before, .current::after {
  background: #f4f4f4;
}

.new-tab {
  display: flex;
  align-items: center;
  justify-content: center;
  width: 23px;
  height: 17px;
  border-radius: 3px 7px 3px 8px;
  margin-bottom: 2px;
  background: #dadada;
}

/* Model space */
.viewport {
  flex: 1;
  position: relative;
  min-height: 500px;
}

.view-label {
  padding: 6px 2px;
  color: #222;
}

.model {
  position: absolute;
  left: 500px;
  top: 0;
}

.model text {
  font-size: 16px;
  font-weight: 300;
}

.edge {
  stroke: #1c1c22;
  stroke-width: 1;
}

.outline {
  stroke: #000;
  stroke-width: 1.3;
}

path.edge:not([fill]), path.outline:not([fill]) {
  fill: none;
}
```
